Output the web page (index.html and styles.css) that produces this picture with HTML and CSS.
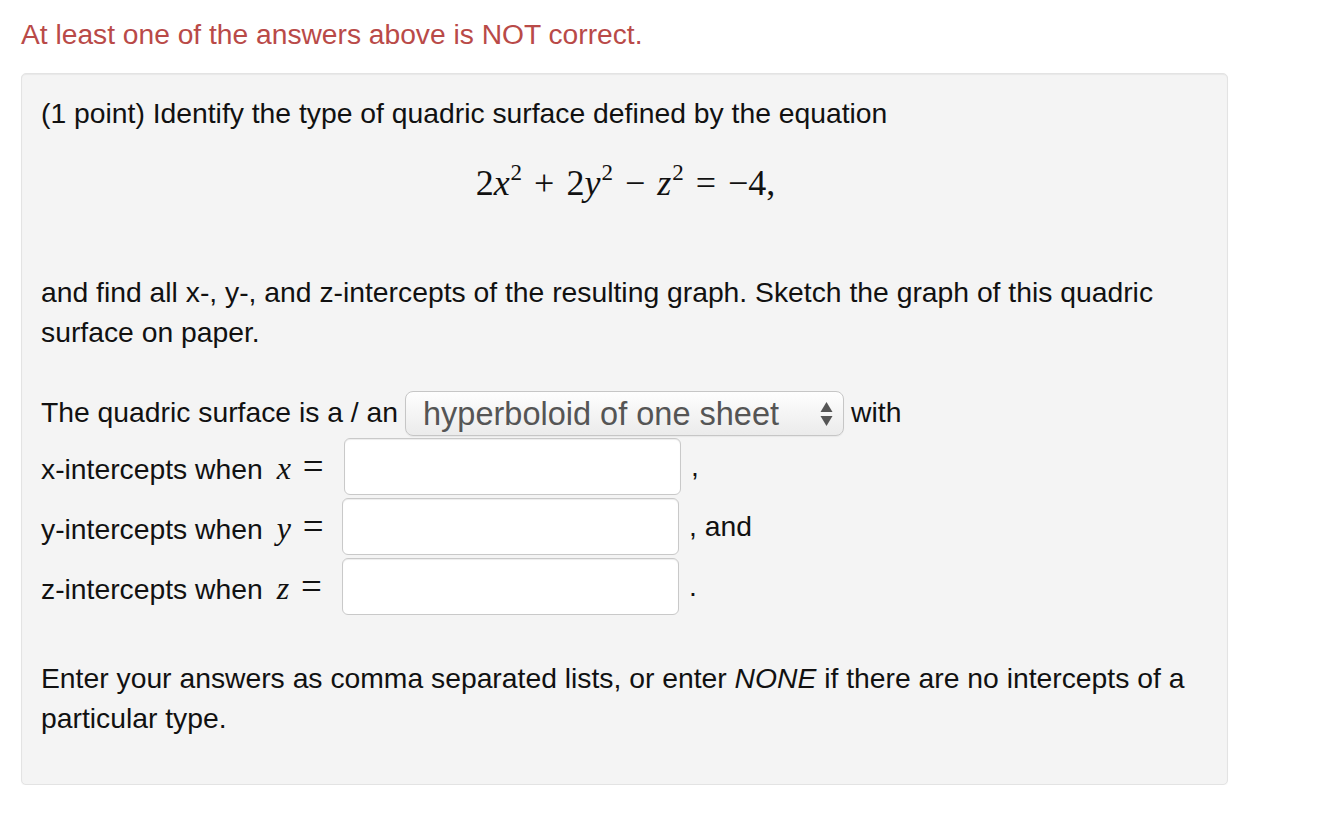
FILE: index.html
```html
<!DOCTYPE html>
<html>
<head>
<meta charset="utf-8">
<link rel="stylesheet" href="styles.css">
</head>
<body>
<div class="page">
  <div class="alert">At least one of the answers above is NOT correct.</div>
  <div class="well">
    <p class="line">(1 point) Identify the type of quadric surface defined by the equation</p>
    <div class="display">
      <span class="math">2<i>x</i><sup>2</sup><span class="op">+</span>2<i>y</i><sup class="ysup">2</sup><span class="op">−</span><i>z</i><sup>2</sup><span class="op">=</span>−4,</span>
    </div>
    <p class="para">and find all x-, y-, and z-intercepts of the resulting graph. Sketch the graph of this quadric surface on paper.</p>
    <div class="answers">
      <div class="row row-select">
        <span class="select-label">The quadric surface is a / an</span>
        <div class="select">
          <span class="select-text">hyperboloid of one sheet</span>
          <svg class="arrows" width="13" height="26" viewBox="0 0 13 26"><path d="M6.5 1 L12.5 11 L0.5 11 Z" fill="#555"/><path d="M6.5 25 L12.5 15 L0.5 15 Z" fill="#555"/></svg>
        </div>
        <span class="select-label">with</span>
      </div>
      <div class="row">
        <span class="label label-x">x-intercepts when <i class="mv">x</i> <span class="eq">=</span></span>
        <div class="input"></div>
        <span class="after">,</span>
      </div>
      <div class="row">
        <span class="label">y-intercepts when <i class="mv">y</i> <span class="eq">=</span></span>
        <div class="input"></div>
        <span class="after">, and</span>
      </div>
      <div class="row">
        <span class="label">z-intercepts when <i class="mv">z</i> <span class="eq">=</span></span>
        <div class="input"></div>
        <span class="after">.</span>
      </div>
    </div>
    <p class="para last">Enter your answers as comma separated lists, or enter <span class="it">NONE</span> if there are no intercepts of a particular type.</p>
  </div>
</div>
</body>
</html>
```
FILE: styles.css
```css
html, body {
  margin: 0;
  padding: 0;
  background: #ffffff;
}
body {
  font-family: "Liberation Sans", Arial, Helvetica, sans-serif;
  font-size: 28.3px;
  color: #111;
}
.page {
  padding: 17px 0 0 21px;
  width: 1207px;
}
.alert {
  color: #b94a48;
  font-size: 28.2px;
  line-height: 34px;
  margin-bottom: 22px;
}
.well {
  background: #f4f4f4;
  border: 1px solid #e3e3e3;
  border-radius: 5px;
  box-shadow: inset 0 1px 1px rgba(0,0,0,0.05), 0 1px 1px rgba(0,0,0,0.04);
  padding: 19px 19px 46px 19px;
}
p {
  margin: 0;
}
.line {
  line-height: 40px;
}
.display {
  text-align: center;
  margin-top: 30px;
  height: 40px;
}
.math {
  font-family: "Liberation Serif", "Times New Roman", serif;
  font-size: 36px;
  line-height: 40px;
  white-space: nowrap;
  padding-left: 2px;
}
.math i {
  font-style: italic;
}
.math sup {
  font-size: 23px;
  line-height: 1;
  vertical-align: 0;
  position: relative;
  top: -15px;
  margin-left: 1px;
}
.math .op {
  margin: 0 12px;
}
.para {
  line-height: 40px;
  margin-top: 69px;
}
.it {
  font-style: italic;
}
.answers {
  margin-top: 39px;
  display: flex;
  flex-direction: column;
}
.row {
  display: flex;
  align-items: center;
  height: 57px;
  margin-top: 3px;
}
.row-select {
  height: 45px;
  margin-top: 0;
  margin-bottom: -1px;
}
.select-label {
  padding-bottom: 3px;
}
.select {
  width: 439px;
  height: 45px;
  margin: 0 7px 0 7px;
  border: 1px solid #c6c6c6;
  border-radius: 8px;
  background: linear-gradient(#fefefe, #ebebeb);
  box-shadow: 0 1px 1px rgba(0,0,0,0.05);
  display: flex;
  align-items: center;
  justify-content: space-between;
  padding: 0 10px 0 17px;
  box-sizing: border-box;
}
.select-text {
  font-size: 32.5px;
  color: #555;
  padding-top: 2px;
}
.arrows {
  display: block;
}
.label {
  width: 301px;
  white-space: nowrap;
}
.label-x {
  width: 303px;
}
.mv {
  font-family: "Liberation Serif", "Times New Roman", serif;
  font-size: 32px;
  line-height: 1;
  font-style: italic;
  margin-left: 6px;
}
.eq {
  font-family: "Liberation Serif", "Times New Roman", serif;
  font-size: 37px;
  line-height: 1;
  margin-left: 4px;
}
.input {
  width: 337px;
  height: 57px;
  background: #fff;
  border: 1px solid #c9c9c9;
  border-radius: 6px;
  box-sizing: border-box;
  box-shadow: inset 0 1px 1px rgba(0,0,0,0.075);
}
.after {
  margin-left: 10px;
}
.para.last {
  margin-top: 43px;
}
```
